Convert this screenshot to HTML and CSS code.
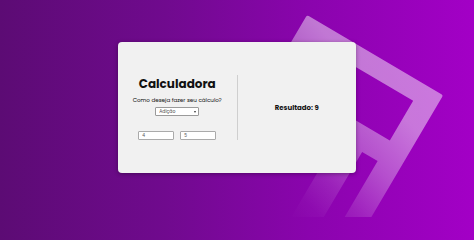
FILE: index.html
```html
<!DOCTYPE html>
<html lang="pt-BR">
<head>
<meta charset="utf-8">
<title>Calculadora</title>
<link rel="stylesheet" href="styles.css">
</head>
<body>
<div class="page">
  <svg class="deco" width="474" height="217" viewBox="0 0 474 217" aria-hidden="true">
    <defs>
      <linearGradient id="fade" gradientUnits="userSpaceOnUse" x1="460" y1="40" x2="280" y2="210">
        <stop offset="0" stop-color="#fff" stop-opacity="0.48"/>
        <stop offset="0.38" stop-color="#fff" stop-opacity="0.46"/>
        <stop offset="0.6" stop-color="#fff" stop-opacity="0.3"/>
        <stop offset="0.78" stop-color="#fff" stop-opacity="0.12"/>
        <stop offset="0.9" stop-color="#fff" stop-opacity="0.03"/>
        <stop offset="1" stop-color="#fff" stop-opacity="0"/>
      </linearGradient>
      <clipPath id="frame">
        <path transform="translate(307 15) rotate(30.5)" clip-rule="evenodd"
          d="M2 0 H156 Q158 0 158 2 V320 H0 V2 Q0 0 2 0 Z
             M20 20 H135 V66 H20 Z
             M20 90 H89 V320 H20 Z
             M117 90 H135 V320 H117 Z"/>
      </clipPath>
    </defs>
    <rect x="0" y="0" width="474" height="217" fill="url(#fade)" clip-path="url(#frame)"/>
  </svg>
  <main class="card">
    <section class="calc">
      <h1 class="title">Calculadora</h1>
      <p class="question">Como deseja fazer seu cálculo?</p>
      <div class="select-wrap">
        <select class="op">
          <option>Adição</option>
          <option>Subtração</option>
          <option>Multiplicação</option>
          <option>Divisão</option>
        </select>
      </div>
      <div class="inputs">
        <input class="num" type="text" value="4">
        <input class="num" type="text" value="5">
      </div>
    </section>
    <div class="divider"></div>
    <section class="result">
      <h2 class="result-text">Resultado: 9</h2>
    </section>
  </main>
</div>
</body>
</html>
```
FILE: styles.css
```css
* { box-sizing: border-box; }
html, body {
  margin: 0;
  padding: 0;
  height: 100%;
  overflow: hidden;
  background: #7a0a98;
}
body {
  font-family: "Poppins", "Inter", "Noto Sans", sans-serif;
  color: #111;
}
.page {
  position: relative;
  width: 100%;
  height: 217px;
  min-height: 100vh;
  background: linear-gradient(to right, #5c0b74 0%, #700a8e 35%, #8a04ad 65%, #a300c6 100%);
  display: flex;
  align-items: flex-start;
  justify-content: center;
  padding-top: 42px;
}
.deco {
  position: absolute;
  left: 0;
  top: 0;
}
.card {
  position: relative;
  z-index: 1;
  width: 238px;
  height: 131px;
  background: #f1f1f1;
  border-radius: 4px;
  box-shadow: 0 1px 4px rgba(0, 0, 0, 0.35);
  display: grid;
  grid-template-columns: 1fr 1px 1fr;
  align-items: center;
}
.calc {
  display: flex;
  flex-direction: column;
  align-items: center;
  padding-top: 1px;
}
.title {
  margin: 0;
  font-size: 12px;
  line-height: 14px;
  font-weight: 700;
}
.question {
  margin: 6px 0 0;
  font-size: 5.6px;
  line-height: 7px;
}
.select-wrap {
  position: relative;
  margin-top: 3px;
  width: 44px;
  height: 9px;
}
.select-wrap::after {
  content: "";
  position: absolute;
  right: 3px;
  top: 4px;
  border-left: 1.5px solid transparent;
  border-right: 1.5px solid transparent;
  border-top: 2px solid #333;
  pointer-events: none;
}
.op {
  appearance: none;
  -webkit-appearance: none;
  display: block;
  width: 44px;
  height: 9px;
  margin: 0;
  padding: 0 0 0 3px;
  font-family: inherit;
  font-size: 4.6px;
  line-height: 7px;
  color: #444;
  background: #fff;
  border: 0.6px solid #9a9a9a;
  border-radius: 1px;
}
.inputs {
  display: flex;
  gap: 6px;
  margin-top: 15px;
}
.num {
  width: 36px;
  height: 9px;
  margin: 0;
  padding: 0 0 0 3px;
  font-family: inherit;
  font-size: 4.4px;
  color: #555;
  background: #fff;
  border: 0.6px solid #aaa;
  border-radius: 1px;
}
.divider {
  width: 1px;
  height: 65px;
  background: #cfcfcf;
}
.result {
  display: flex;
  justify-content: center;
}
.result-text {
  margin: 0;
  font-size: 7px;
  line-height: 9px;
  font-weight: 700;
}
```
